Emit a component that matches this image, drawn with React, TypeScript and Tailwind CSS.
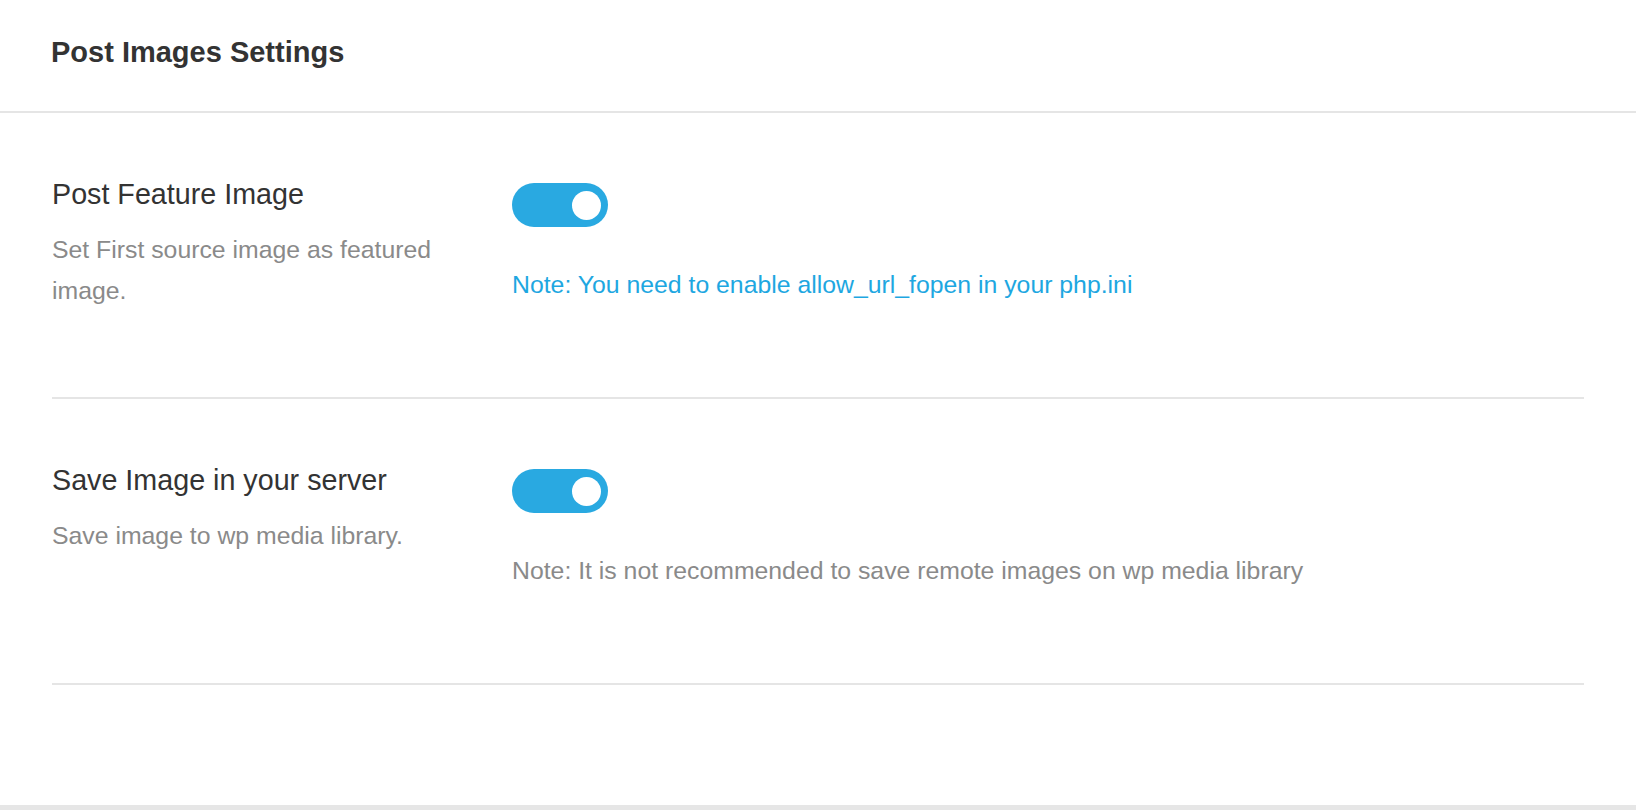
import React from 'react';

type SettingRow = {
  id: string;
  label: string;
  description: string;
  note: string;
  noteTone: 'info' | 'muted';
  enabled: boolean;
};

const rows: SettingRow[] = [
  {
    id: 'feature',
    label: 'Post Feature Image',
    description: 'Set First source image as featured image.',
    note: 'Note: You need to enable allow_url_fopen in your php.ini',
    noteTone: 'info',
    enabled: true,
  },
  {
    id: 'save',
    label: 'Save Image in your server',
    description: 'Save image to wp media library.',
    note: 'Note: It is not recommended to save remote images on wp media library',
    noteTone: 'muted',
    enabled: true,
  },
];

const Toggle: React.FC<{ on: boolean }> = ({ on }) => (
  <button
    type="button"
    className={`flex h-[44px] w-[96px] items-center rounded-full px-[7px] ${
      on ? 'justify-end bg-[#29a9e1]' : 'justify-start bg-[#d5d5d5]'
    }`}
  >
    <span className="block h-[29px] w-[29px] rounded-full bg-white" />
  </button>
);

export default function App() {
  return (
    <div className="min-h-screen bg-[#e6e6e6] font-[family-name:'Liberation_Sans',Arial,sans-serif]">
      <div className="h-[805px] bg-white">
        <div className="h-[113px] border-b-2 border-[#e5e5e5] px-[51px] pt-[35px]">
          <h2 className="text-[29px] font-bold leading-[34.8px] text-[#333333]">Post Images Settings</h2>
        </div>

        <div className="px-[52px]">
          {rows.map((row) => (
            <div key={row.id} className="flex h-[286px] border-b-2 border-[#e5e5e5] pt-[64px]">
              <div className="w-[460px] shrink-0 pr-[30px]">
                <p className="text-[28.7px] leading-[34px] text-[#333333]">{row.label}</p>
                <p className="mt-[18px] text-[24.8px] leading-[41px] text-[#8a8a8a]">{row.description}</p>
              </div>
              <div className="flex flex-col pt-[6px]">
                <Toggle on={row.enabled} />
                <p
                  className={`mt-[37px] text-[24.8px] leading-[41px] ${
                    row.noteTone === 'info' ? 'text-[#1ea7e1]' : 'text-[#8a8a8a]'
                  }`}
                >
                  {row.note}
                </p>
              </div>
            </div>
          ))}
        </div>
      </div>
    </div>
  );
}
